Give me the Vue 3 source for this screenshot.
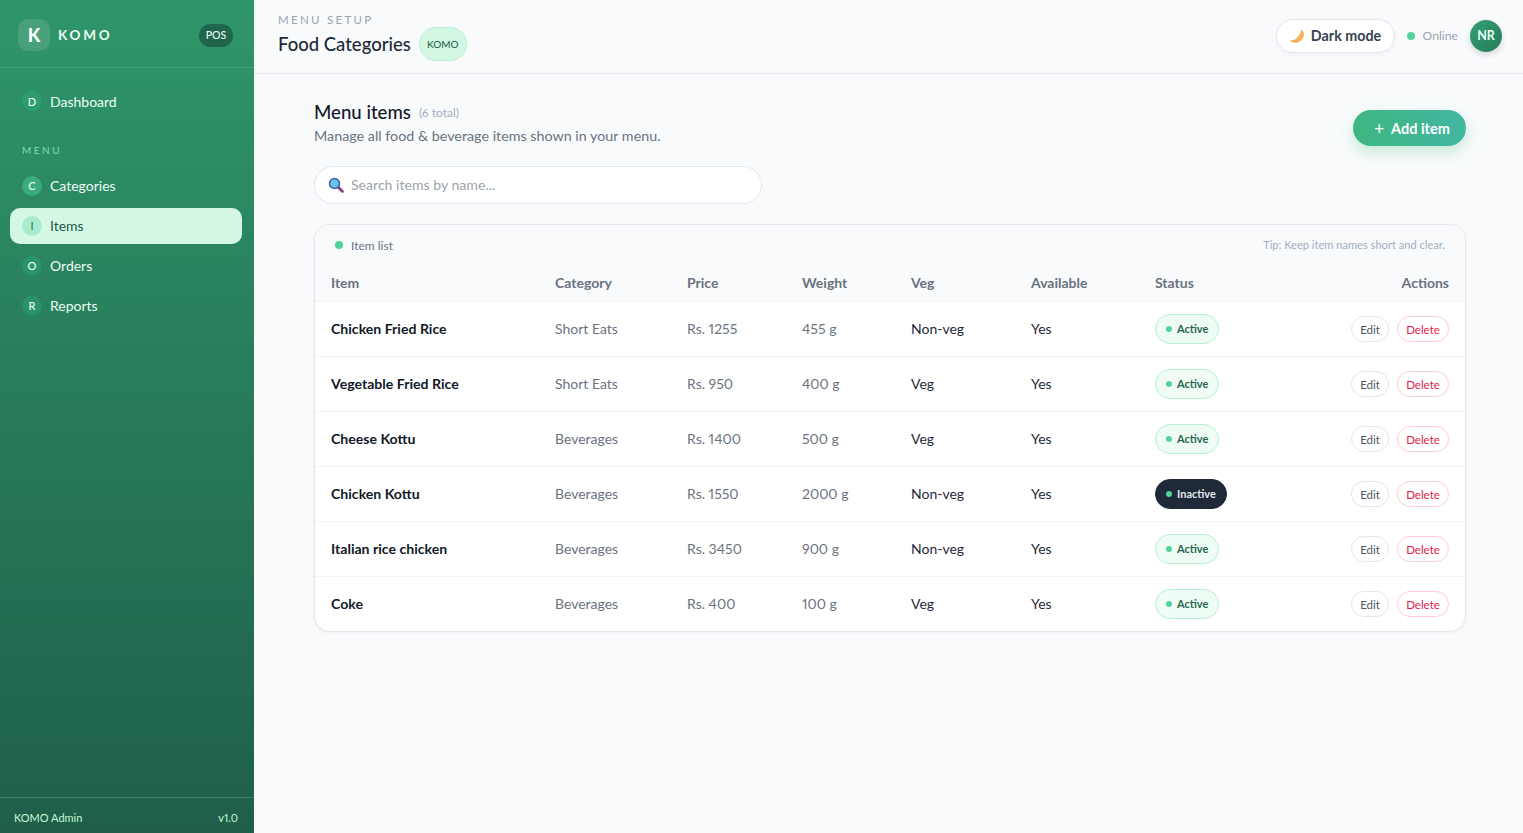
<template>
  <div class="layout">
    <!-- sidebar -->
    <aside class="sidebar">
      <div class="brand">
        <div class="brand-logo">K</div>
        <div class="brand-name">KOMO</div>
        <div class="brand-tag">POS</div>
      </div>
      <nav class="nav">
        <a class="nav-link">
          <span class="nav-icon">D</span>
          <span>Dashboard</span>
        </a>
        <div class="nav-section">MENU</div>
        <a
          v-for="link in menuLinks"
          :key="link.label"
          class="nav-link nav-row"
          :class="{ 'is-active': link.active, 'is-lit': link.lit }"
        >
          <span class="nav-icon">{{ link.label[0] }}</span>
          <span>{{ link.label }}</span>
        </a>
      </nav>
      <div class="side-footer">
        <span>KOMO Admin</span>
        <span>v1.0</span>
      </div>
    </aside>

    <div class="main">
      <!-- topbar -->
      <header class="topbar">
        <div>
          <div class="eyebrow">MENU SETUP</div>
          <div class="title-row">
            <h1 class="page-title">Food Categories</h1>
            <span class="title-chip">KOMO</span>
          </div>
        </div>
        <div class="top-actions">
          <button class="theme-btn">
            <svg width="16" height="16" viewBox="0 0 16 16">
              <path d="M12.600 1C15.600 4 15.800 8.200 13.300 11.300 10.600 14.800 5.400 15.400 1 12.400 4 12.400 6.600 11.400 8.400 9.400 10.500 7.200 12 4.300 12.600 1z" fill="#f6b655" />
              <path d="M1 12.400c2.200 1.500 4.500 2.200 6.700 2.100 1.200-.1 2.200-.4 3.200-.9-3.200.4-6.600 0-9.900-1.200z" fill="#dc8f42" />
            </svg>
            Dark mode
          </button>
          <span class="online"><i class="dot"></i>Online</span>
          <div class="avatar">NR</div>
        </div>
      </header>

      <main class="content">
        <div class="content-head">
          <div>
            <div class="head-title">
              <h2>Menu items</h2>
              <span>(6 total)</span>
            </div>
            <p class="head-sub">Manage all food &amp; beverage items shown in your menu.</p>
          </div>
          <button class="add-btn"><span class="plus">+</span>Add item</button>
        </div>

        <div class="search">
          <svg width="16" height="16" viewBox="0 0 16 16">
            <line x1="10" y1="10" x2="14.500" y2="14.500" stroke="#7b3f86" stroke-width="2.600" stroke-linecap="round" />
            <circle cx="6.500" cy="6.500" r="5" fill="#63c5ea" stroke="#3f5c9c" stroke-width="1.500" />
          </svg>
          <span>Search items by name...</span>
        </div>

        <section class="card">
          <div class="card-top">
            <span class="card-label"><i class="dot"></i>Item list</span>
            <span class="card-tip">Tip: Keep item names short and clear.</span>
          </div>
          <table class="items">
            <thead>
              <tr>
                <th class="c-item">Item</th>
                <th class="c-cat">Category</th>
                <th class="c-price">Price</th>
                <th class="c-weight">Weight</th>
                <th class="c-veg">Veg</th>
                <th class="c-avail">Available</th>
                <th class="c-status">Status</th>
                <th class="c-actions">Actions</th>
              </tr>
            </thead>
            <tbody>
              <tr v-for="row in items" :key="row.name">
                <td class="name">{{ row.name }}</td>
                <td class="muted">{{ row.category }}</td>
                <td class="muted">Rs. {{ row.price }}</td>
                <td class="muted">{{ row.weight }} g</td>
                <td>{{ row.veg }}</td>
                <td>Yes</td>
                <td>
                  <span class="status" :class="{ 'is-off': !row.active }">
                    <i class="dot small"></i>{{ row.active ? 'Active' : 'Inactive' }}
                  </span>
                </td>
                <td class="c-actions">
                  <button class="mini">Edit</button>
                  <button class="mini danger">Delete</button>
                </td>
              </tr>
            </tbody>
          </table>
        </section>
      </main>
    </div>
  </div>
</template>

<script setup>
const menuLinks = [
  { label: 'Categories', lit: true },
  { label: 'Items', active: true },
  { label: 'Orders' },
  { label: 'Reports' }
]

const items = [
  { name: 'Chicken Fried Rice', category: 'Short Eats', price: 1255, weight: 455, veg: 'Non-veg', active: true },
  { name: 'Vegetable Fried Rice', category: 'Short Eats', price: 950, weight: 400, veg: 'Veg', active: true },
  { name: 'Cheese Kottu', category: 'Beverages', price: 1400, weight: 500, veg: 'Veg', active: true },
  { name: 'Chicken Kottu', category: 'Beverages', price: 1550, weight: 2000, veg: 'Non-veg', active: false },
  { name: 'Italian rice chicken', category: 'Beverages', price: 3450, weight: 900, veg: 'Non-veg', active: true },
  { name: 'Coke', category: 'Beverages', price: 400, weight: 100, veg: 'Veg', active: true }
]
</script>

<style>
html, body {
  margin: 0;
  background: #f8fafc;
}
</style>

<style scoped>
.layout {
  display: flex;
  height: 833px;
  overflow: hidden;
  font-family: Lato, "Noto Sans", sans-serif;
  color: #111827;
  font-variant-numeric: proportional-nums;
}

/* sidebar */
.sidebar {
  width: 254px;
  flex: none;
  display: flex;
  flex-direction: column;
  color: #ecfdf5;
  background: linear-gradient(180deg, #2f9669 0%, #1f5f4a 100%);
}

.brand {
  height: 64px;
  display: flex;
  align-items: center;
  padding: 3px 21px 0 18px;
  border-bottom: 1px solid rgba(110, 231, 183, 0.2);
}

.brand-logo {
  width: 32px;
  height: 32px;
  border-radius: 10px;
  background: rgba(255, 255, 255, 0.12);
  display: flex;
  align-items: center;
  justify-content: center;
  font-size: 18px;
  font-weight: 900;
  color: #fff;
}

.brand-name {
  margin-left: 8px;
  font-size: 13.500px;
  font-weight: 700;
  letter-spacing: 2.800px;
  flex: 1;
}

.brand-tag {
  width: 34px;
  height: 23px;
  border-radius: 12px;
  background: #1f664d;
  display: flex;
  align-items: center;
  justify-content: center;
  font-size: 10.500px;
  font-weight: 500;
}

.nav {
  flex: 1;
  padding: 15px 12px 0 10px;
}

.nav-link {
  height: 36px;
  display: flex;
  align-items: center;
  gap: 8px;
  padding: 0 12px;
  border-radius: 10px;
  font-size: 14px;
}

.nav-row {
  box-sizing: border-box;
  padding-bottom: 1px;
  margin-bottom: 4px;
}

.nav-icon {
  width: 20px;
  height: 20px;
  border-radius: 50%;
  background: rgba(52, 211, 153, 0.2);
  display: flex;
  align-items: center;
  justify-content: center;
  font-size: 11px;
  font-weight: 500;
}

.is-lit .nav-icon {
  background: #3bab7c;
}

.is-active {
  background: #d5f8e5;
  color: #22584a;
}

.is-active .nav-icon {
  background: #a9eccd;
  color: #2f855a;
}

.nav-section {
  margin: 24px 0 11px 12px;
  height: 14px;
  line-height: 14px;
  font-size: 10px;
  letter-spacing: 2.500px;
  color: #7fdcb4;
}

.side-footer {
  height: 32px;
  display: flex;
  align-items: center;
  justify-content: space-between;
  padding: 3px 16px 0 14px;
  font-size: 11px;
  color: #c6f6d5;
  border-top: 1px solid rgba(110, 231, 183, 0.25);
}

/* topbar */
.main {
  flex: 1;
  min-width: 0;
}

.topbar {
  height: 73px;
  display: flex;
  align-items: center;
  justify-content: space-between;
  padding: 0 21px 0 24px;
  border-bottom: 1px solid #e5e7eb;
}

.eyebrow {
  font-size: 11.500px;
  line-height: 14px;
  letter-spacing: 2.300px;
  color: #9ca3af;
}

.title-row {
  display: flex;
  align-items: center;
  gap: 8px;
}

.page-title {
  margin: 0;
  font-size: 18.500px;
  font-weight: 500;
  color: #1f2937;
}

.title-chip {
  height: 34px;
  width: 48px;
  box-sizing: border-box;
  border: 1px solid #b7f0d0;
  border-radius: 17px;
  background: #d5f8e5;
  display: flex;
  align-items: center;
  justify-content: center;
  font-size: 10px;
  font-weight: 500;
  color: #276749;
}

.top-actions {
  display: flex;
  align-items: center;
  margin-bottom: 2px;
}

.theme-btn {
  height: 34px;
  width: 119px;
  padding: 0;
  border: 1px solid #e2e8f0;
  border-radius: 17px;
  background: #fff;
  display: flex;
  align-items: center;
  justify-content: center;
  gap: 6px;
  font-family: inherit;
  font-size: 14.300px;
  font-weight: 700;
  color: #374151;
  box-shadow: 0 2px 4px rgba(15, 23, 42, 0.04);
}

.online {
  display: flex;
  align-items: center;
  gap: 8px;
  margin-left: 12px;
  font-size: 12.200px;
  color: #9ca3af;
}

.dot {
  display: inline-block;
  width: 8px;
  height: 8px;
  border-radius: 50%;
  background: #4fd49b;
}

.dot.small {
  width: 6px;
  height: 6px;
}

.avatar {
  margin-left: 12px;
  width: 32px;
  height: 32px;
  border-radius: 50%;
  background: linear-gradient(135deg, #34a273, #27795a);
  display: flex;
  align-items: center;
  justify-content: center;
  font-size: 12.500px;
  font-weight: 700;
  color: #e6fffa;
  box-shadow: 0 3px 6px rgba(15, 23, 42, 0.15);
}

/* content */
.content {
  padding: 27px 57px 0 60px;
}

.content-head {
  display: flex;
  justify-content: space-between;
  align-items: flex-start;
}

.head-title {
  display: flex;
  align-items: center;
  gap: 8px;
  height: 22px;
}

.head-title h2 {
  margin: 0;
  font-size: 18.600px;
  font-weight: 500;
  color: #111827;
}

.head-title span {
  font-size: 12px;
  color: #a0aec0;
}

.head-sub {
  margin: 3px 0 0;
  font-size: 14.300px;
  line-height: 20px;
  color: #6b7280;
}

.add-btn {
  margin-top: 9px;
  width: 113px;
  height: 36px;
  border: 0;
  padding: 0 0 0 5px;
  border-radius: 18px;
  background: linear-gradient(90deg, #3eb67f, #42b6a2);
  color: #fff;
  display: flex;
  align-items: center;
  justify-content: center;
  gap: 7px;
  font-family: inherit;
  font-size: 14.500px;
  font-weight: 700;
  box-shadow: 0 6px 14px rgba(72, 187, 120, 0.28);
}

.plus {
  font-size: 17px;
  font-weight: 400;
}

.search {
  margin-top: 20px;
  width: 448px;
  height: 38px;
  box-sizing: border-box;
  border: 1px solid #e2e8f0;
  border-radius: 19px;
  background: #fff;
  display: flex;
  align-items: center;
  gap: 7px;
  padding: 0 13px 1px;
  font-size: 14.100px;
  color: #9ca3af;
}

.card {
  margin-top: 20px;
  box-sizing: border-box;
  height: 408px;
  border: 1px solid #e5e7eb;
  border-radius: 16px;
  overflow: hidden;
  background: #fff;
  box-shadow: 0 1px 3px rgba(15, 23, 42, 0.05);
}

.card-top {
  height: 40px;
  background: #f8fafc;
  display: flex;
  align-items: center;
  justify-content: space-between;
  padding: 0 20px;
  box-sizing: border-box;
}

.card-label {
  display: flex;
  align-items: center;
  gap: 8px;
  font-size: 12px;
  color: #6b7280;
}

.card-tip {
  font-size: 11.100px;
  color: #a0aec0;
  margin-bottom: 1px;
}

.items {
  width: 100%;
  border-collapse: collapse;
  table-layout: fixed;
  font-size: 14px;
}

.items th {
  height: 36px;
  box-sizing: border-box;
  padding: 0 16px;
  text-align: left;
  font-size: 14px;
  font-weight: 700;
  color: #6b7280;
  background: #f8fafc;
  border-bottom: 1px solid #f1f5f9;
}

.items td {
  height: 55px;
  box-sizing: border-box;
  padding: 0 16px;
  color: #1f2937;
  border-bottom: 1px solid #f1f5f9;
}

.items tr:last-child td {
  border-bottom: 0;
}

.c-item { width: 224px; }
.c-cat { width: 132px; }
.c-price { width: 115px; }
.c-weight { width: 109px; }
.c-veg { width: 120px; }
.c-avail { width: 124px; }
.c-status { width: 100px; }

.items .c-actions {
  text-align: right;
  white-space: nowrap;
}

.items .name {
  font-size: 14.100px;
  font-weight: 700;
  color: #111827;
}

.items .muted {
  color: #6b7280;
}

.status {
  display: inline-flex;
  align-items: center;
  gap: 5px;
  height: 30px;
  box-sizing: border-box;
  padding: 0 10px;
  border: 1px solid #b7f0d0;
  border-radius: 15px;
  background: #effcf5;
  font-size: 11px;
  font-weight: 700;
  color: #276749;
}

.status.is-off {
  background: #1f2937;
  border-color: #1f2937;
  color: #e2e8f0;
}

.mini {
  width: 38px;
  height: 26px;
  padding: 1px 0 0;
  border: 1px solid #e2e8f0;
  border-radius: 13px;
  background: #fff;
  font-family: inherit;
  font-size: 11.500px;
  color: #4b5563;
}

.mini.danger {
  width: 52px;
  margin-left: 8px;
  border-color: #fecdd3;
  color: #e11d48;
}
</style>
